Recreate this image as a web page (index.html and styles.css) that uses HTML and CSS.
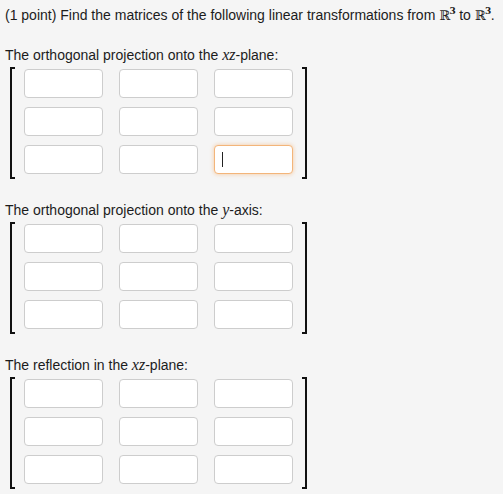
FILE: index.html
```html
<!DOCTYPE html>
<html lang="en">
<head>
  <meta charset="UTF-8">
  <title>Linear transformations</title>
  <link rel="stylesheet" href="styles.css">
</head>
<body>

  <p class="problem">(1 point) Find the matrices of the following linear transformations from <span class="reals">ℝ<sup>3</sup></span> to <span class="reals">ℝ<sup>3</sup></span>.</p>

  <!-- Part 1 -->
  <div class="part">
    <p class="part-label">The orthogonal projection onto the <span class="math">xz</span>-plane:</p>
    <div class="matrix">
      <span class="bracket left"></span>
      <div class="cells">
        <div class="cell"></div><div class="cell"></div><div class="cell"></div>
        <div class="cell"></div><div class="cell"></div><div class="cell"></div>
        <div class="cell"></div><div class="cell"></div><div class="cell focused"><span class="caret"></span></div>
      </div>
      <span class="bracket right"></span>
    </div>
  </div>

  <!-- Part 2 -->
  <div class="part">
    <p class="part-label">The orthogonal projection onto the <span class="math">y</span>-axis:</p>
    <div class="matrix">
      <span class="bracket left"></span>
      <div class="cells">
        <div class="cell"></div><div class="cell"></div><div class="cell"></div>
        <div class="cell"></div><div class="cell"></div><div class="cell"></div>
        <div class="cell"></div><div class="cell"></div><div class="cell"></div>
      </div>
      <span class="bracket right"></span>
    </div>
  </div>

  <!-- Part 3 -->
  <div class="part">
    <p class="part-label">The reflection in the <span class="math">xz</span>-plane:</p>
    <div class="matrix">
      <span class="bracket left"></span>
      <div class="cells">
        <div class="cell"></div><div class="cell"></div><div class="cell"></div>
        <div class="cell"></div><div class="cell"></div><div class="cell"></div>
        <div class="cell"></div><div class="cell"></div><div class="cell"></div>
      </div>
      <span class="bracket right"></span>
    </div>
  </div>

</body>
</html>
```

FILE: styles.css
```css
body {
  font-family: 'Liberation Sans', Arial, sans-serif;
  font-size: 14px;
  color: #1c1c1c;
  background-color: #f5f5f5;
  margin: 0;
  padding: 7px 5px 0 5px;
  overflow: hidden;
}

p {
  margin: 0;
  line-height: 16px;
}

.problem {
  margin-bottom: 23px;
  white-space: nowrap;
}

.reals {
  font-family: 'DejaVu Serif', serif;
  font-size: 13px;
  letter-spacing: -0.5px;
}

.reals sup {
  font-size: 9px;
  font-weight: bold;
  vertical-align: 6px;
  line-height: 0;
}

.math {
  font-family: 'Liberation Serif', serif;
  font-style: italic;
  font-size: 16px;
}

.part {
  margin-bottom: 23px;
}

.part-label {
  margin-bottom: 4px;
}

.matrix {
  display: flex;
  margin-left: 5px;
}

.bracket {
  width: 3px;
  border: 2px solid #111;
}

.bracket.left {
  border-right: none;
}

.bracket.right {
  border-left: none;
}

.cells {
  display: grid;
  grid-template-columns: repeat(3, 79px);
  column-gap: 16px;
  row-gap: 9px;
  padding: 2px 9px 5px 9px;
}

.cell {
  height: 27px;
  background: #fff;
  border: 1px solid #cdcdcd;
  border-radius: 4px;
  position: relative;
}

.cell.focused {
  border-color: #f3b57a;
  box-shadow: 0 0 4px rgba(245, 160, 80, 0.55);
}

.caret {
  position: absolute;
  left: 7px;
  top: 6px;
  width: 1px;
  height: 15px;
  background: #222;
}
```
